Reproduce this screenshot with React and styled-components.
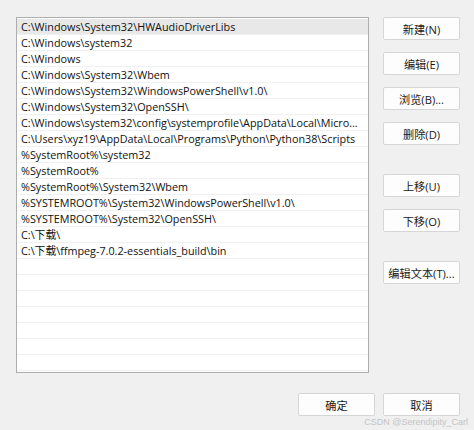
import React from "react";
import styled, { createGlobalStyle } from "styled-components";

const GlobalStyle = createGlobalStyle`
  html, body {
    margin: 0;
    padding: 0;
    background: #f0f0f0;
  }
  body {
    font-family: "Open Sans", "Noto Sans CJK SC", sans-serif;
    font-size: 12px;
    color: #111111;
  }
`;

const Dialog = styled.div`
  width: 474px;
  height: 430px;
  box-sizing: border-box;
  padding: 17px 14px 0 16px;
  display: flex;
  flex-direction: column;
  position: relative;
`;

const Main = styled.div`
  display: flex;
  gap: 14px;
`;

const ListBox = styled.div`
  width: 353px;
  height: 356px;
  box-sizing: border-box;
  background: #ffffff;
  border: 1px solid #adadad;
  overflow: hidden;
  padding-top: 1px;
`;

const Row = styled.div`
  height: 16px;
  line-height: 16px;
  box-sizing: border-box;
  border-bottom: 1px solid #f0f0f0;
  padding: 0 6px 0 4px;
  font-size: 10.8px;
  white-space: nowrap;
  overflow: hidden;
  text-overflow: ellipsis;
  background: ${(p) => (p.$selected ? "#e8e8e8" : "#ffffff")};
`;

const Side = styled.div`
  display: flex;
  flex-direction: column;
`;

const Button = styled.button`
  width: 77px;
  height: 23px;
  box-sizing: border-box;
  background: #fdfdfd;
  border: 1px solid #d6d6d6;
  border-radius: 2px;
  font-family: "Open Sans", "Noto Sans CJK SC", sans-serif;
  font-size: 11.2px;
  color: #1a1a1a;
  padding: 0;
  white-space: nowrap;
  margin-top: ${(p) => p.$gap || 0}px;
`;

const Footer = styled.div`
  display: flex;
  justify-content: flex-end;
  gap: 8px;
  margin-top: 20px;
`;

const Watermark = styled.div`
  position: absolute;
  right: 6px;
  bottom: 3px;
  font-size: 9px;
  color: #c4c4c4;
  font-family: "Liberation Sans", Arial, sans-serif;
`;

const paths = [
  "C:\\Windows\\System32\\HWAudioDriverLibs",
  "C:\\Windows\\system32",
  "C:\\Windows",
  "C:\\Windows\\System32\\Wbem",
  "C:\\Windows\\System32\\WindowsPowerShell\\v1.0\\",
  "C:\\Windows\\System32\\OpenSSH\\",
  "C:\\Windows\\system32\\config\\systemprofile\\AppData\\Local\\Microsoft\\WindowsApps",
  "C:\\Users\\xyz19\\AppData\\Local\\Programs\\Python\\Python38\\Scripts",
  "%SystemRoot%\\system32",
  "%SystemRoot%",
  "%SystemRoot%\\System32\\Wbem",
  "%SYSTEMROOT%\\System32\\WindowsPowerShell\\v1.0\\",
  "%SYSTEMROOT%\\System32\\OpenSSH\\",
  "C:\\下载\\",
  "C:\\下载\\ffmpeg-7.0.2-essentials_build\\bin",
];

const TOTAL_ROWS = 23;

export default function App() {
  const rows = [];
  for (let i = 0; i < TOTAL_ROWS; i++) {
    rows.push(
      <Row key={i} $selected={i === 0}>
        {paths[i] || "\u00a0"}
      </Row>
    );
  }

  return (
    <>
      <GlobalStyle />
      <Dialog>
        <Main>
          <ListBox>{rows}</ListBox>
          <Side>
            <Button>新建(N)</Button>
            <Button $gap={12}>编辑(E)</Button>
            <Button $gap={12}>浏览(B)...</Button>
            <Button $gap={12}>删除(D)</Button>
            <Button $gap={29}>上移(U)</Button>
            <Button $gap={12}>下移(O)</Button>
            <Button $gap={29}>编辑文本(T)...</Button>
          </Side>
        </Main>
        <Footer>
          <Button>确定</Button>
          <Button>取消</Button>
        </Footer>
        <Watermark>CSDN @Serendipity_Carl</Watermark>
      </Dialog>
    </>
  );
}
